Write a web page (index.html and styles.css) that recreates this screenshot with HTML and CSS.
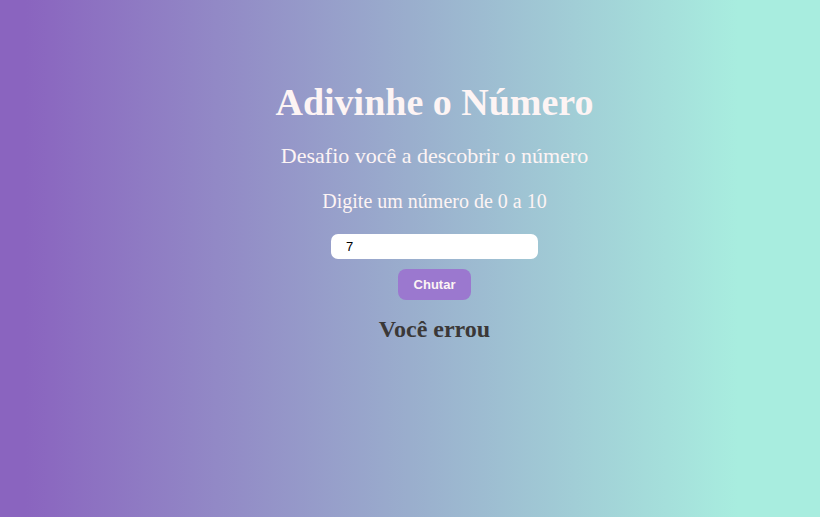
FILE: index.html
```html
<!DOCTYPE html>
<html lang="pt-BR">
    <head>
        <meta charset="UTF-8">
        <meta name="viewport" content="width=device-width, initial-scale=1.0">
        <title>Adivinhe o Número</title>
        <link rel="stylesheet" href="styles.css">
    </head>
    <body>
        <div class="container">
            <h1>Adivinhe o Número</h1>
            <p class="subtitle">Desafio você a descobrir o número</p>
            <p class="label">Digite um número de 0 a 10</p>
            <input type="number" id="palpite" value="7">
            <button class="chutar">Chutar</button>
            <h2 id="resultado">Você errou</h2>
        </div>
    </body>
</html>
```

FILE: styles.css
```css
body {
    margin: 0;
    height: 100vh;
    font-family: "Liberation Serif", serif;
    background: linear-gradient(90deg, #8a64bf 3%, #9aaecd 50%, #a8eddf 90%);
}

.container {
    display: flex;
    flex-direction: column;
    align-items: center;
    padding-top: 80px;
    padding-left: 49px;
    color: #fdf4f4;
}

h1 {
    font-size: 38px;
    margin: 0 0 19px;
}

.subtitle {
    font-size: 22px;
    margin: 0 0 21px;
}

.label {
    font-size: 20px;
    margin: 0 0 21px;
}

input[type="number"] {
    width: 207px;
    height: 25px;
    box-sizing: border-box;
    border: none;
    border-radius: 7px;
    padding: 0 15px;
    font-family: "Liberation Sans", Arial, sans-serif;
    font-size: 13px;
    background-color: white;
    margin-bottom: 10px;
}

.chutar {
    width: 73px;
    height: 31px;
    border: none;
    border-radius: 8px;
    background-color: #9b78cf;
    color: #fdf4f4;
    font-family: "Liberation Sans", Arial, sans-serif;
    font-weight: bold;
    font-size: 13px;
    cursor: pointer;
}

#resultado {
    font-size: 24px;
    color: #3b3838;
    margin: 16px 0 0;
}
```
